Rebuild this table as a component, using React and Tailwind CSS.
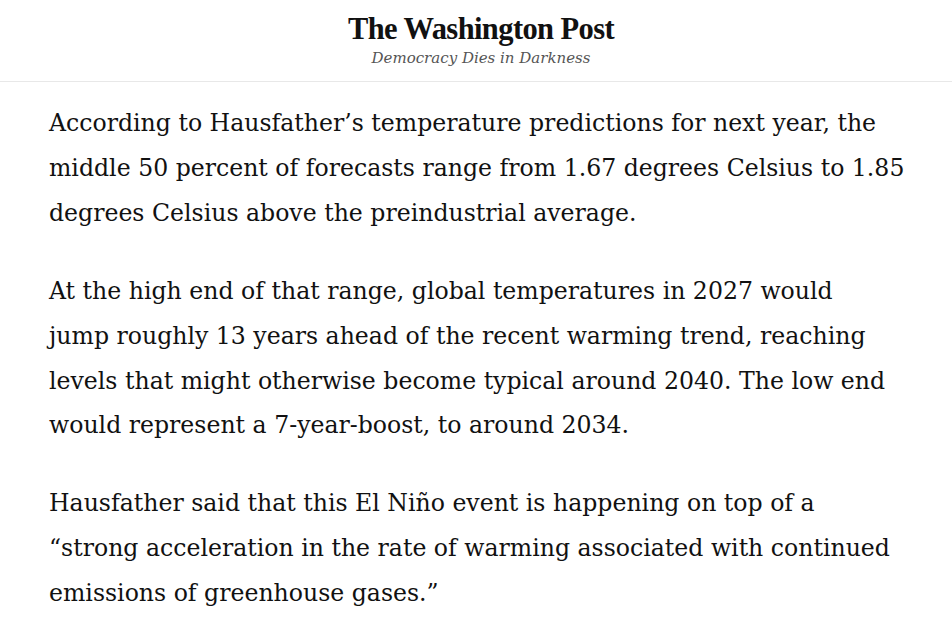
import React from 'react';

const paragraphs = [
  [
    'According to Hausfather\u2019s temperature predictions for next year, the',
    'middle 50 percent of forecasts range from 1.67 degrees Celsius to 1.85',
    'degrees Celsius above the preindustrial average.',
  ],
  [
    'At the high end of that range, global temperatures in 2027 would',
    'jump roughly 13 years ahead of the recent warming trend, reaching',
    'levels that might otherwise become typical around 2040. The low end',
    'would represent a 7-year-boost, to around 2034.',
  ],
  [
    'Hausfather said that this El Ni\u00f1o event is happening on top of a',
    '\u201cstrong acceleration in the rate of warming associated with continued',
    'emissions of greenhouse gases.\u201d',
  ],
];

function Header() {
  return (
    <header className="flex h-[82px] flex-col items-center border-b border-[#e8e8e8] pl-[10px] pt-[12px]">
      {/* masthead, set as text */}
      <div className="font-['Liberation_Serif',serif] text-[30.5px] font-bold leading-[35px] tracking-[-0.6px] text-[#111]">
        The Washington Post
      </div>
      <div className="mt-[2px] font-['DejaVu_Serif',serif] text-[15px] italic leading-[18px] text-[#555]">
        Democracy Dies in Darkness
      </div>
    </header>
  );
}

export default function App() {
  return (
    <div className="min-h-screen bg-white">
      <Header />
      <article className="flex flex-col gap-[33px] px-[49px] pt-[19px] font-['DejaVu_Serif',serif] text-[23.6px] leading-[44.9px] text-[#111]">
        {paragraphs.map((lines, i) => (
          <p key={i}>
            {lines.map((line, j) => (
              <span key={j} className="block whitespace-nowrap">
                {line}
              </span>
            ))}
          </p>
        ))}
      </article>
    </div>
  );
}
